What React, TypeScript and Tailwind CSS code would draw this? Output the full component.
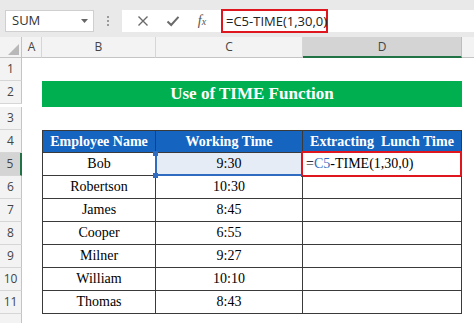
import React from "react";

const ROWS = [
	{ name: "Bob", time: "9:30" },
	{ name: "Robertson", time: "10:30" },
	{ name: "James", time: "8:45" },
	{ name: "Cooper", time: "6:55" },
	{ name: "Milner", time: "9:27" },
	{ name: "William", time: "10:10" },
	{ name: "Thomas", time: "8:43" },
];

const serif = "font-['Liberation_Serif','Times_New_Roman',serif]";
const ui = "font-['Open_Sans','Liberation_Sans',sans-serif]";
const cols = "grid grid-cols-[22px_20px_114px_147px_159px_1fr]";

const RowHead = ({ n, active }: { n: number; active?: boolean }) => (
	<div
		className={`${ui} h-[23px] flex items-center justify-center text-[12px] text-[#444] border-b border-[#d6d6d6] ${
			active ? "bg-[#d4d4d4] border-r-2 border-r-[#217346]" : "bg-[#f3f3f3] border-r border-r-[#c4c4c4]"
		}`}
	>
		{n}
	</div>
);

const App = () => {
	return (
		<div className="w-[474px] h-[323px] overflow-hidden bg-white">
			{/* formula bar */}
			<div className="h-[37px] bg-[#e9e9e9] flex items-start pt-[10px] pl-[5px]">
				<div className={`${ui} w-[89px] h-[22px] bg-white border border-[#cfcfcf] flex items-center justify-between pl-[6px] pr-[5px] text-[13px] text-[#333]`}>
					<span>SUM</span>
					<svg width="7" height="4" viewBox="0 0 7 4">
						<polygon points="0,0 7,0 3.5,4" fill="#666" />
					</svg>
				</div>
				<div className="w-[28px] h-[22px] flex flex-col items-center justify-center gap-[2px]">
					<span className="w-[2px] h-[2px] bg-[#9a9a9a]" />
					<span className="w-[2px] h-[2px] bg-[#9a9a9a]" />
					<span className="w-[2px] h-[2px] bg-[#9a9a9a]" />
				</div>
				<div className="w-[99px] h-[22px] bg-white flex items-center justify-around px-[6px]">
					<svg width="12" height="12" viewBox="0 0 12 12">
						<path d="M1.5 1.5 L10.5 10.5 M10.5 1.5 L1.5 10.5" stroke="#6a6a6a" strokeWidth="1.4" />
					</svg>
					<svg width="14" height="12" viewBox="0 0 14 12">
						<path d="M1.5 6.5 L5.2 10 L12.5 1.8" stroke="#6a6a6a" strokeWidth="2" fill="none" />
					</svg>
					<span className={`${serif} italic text-[14px] text-[#555] leading-none`}>
						f<span className="text-[10px]">x</span>
					</span>
				</div>
				<div className="flex-1 h-[22px] bg-white relative">
					<div className="absolute left-0 top-[-1px] w-[107px] h-[24px] border-2 border-[#e0161e]" />
					<span className={`${ui} absolute left-[5px] top-[2px] text-[13px] text-[#222]`}>=C5-TIME(1,30,0)</span>
				</div>
			</div>

			{/* sheet */}
			<div className={cols}>
				{/* column headers */}
				<div className="h-[21px] bg-[#f3f3f3] border-r border-b border-[#c4c4c4] flex items-end justify-end p-[2px]">
					<svg width="11" height="11" viewBox="0 0 11 11">
						<polygon points="11,0 11,11 0,11" fill="#b8b8b8" />
					</svg>
				</div>
				{["A", "B", "C"].map((c) => (
					<div
						key={c}
						className={`${ui} h-[21px] bg-[#f3f3f3] border-r border-[#d6d6d6] border-b border-b-[#c4c4c4] flex items-center justify-center text-[12px] text-[#444]`}
					>
						{c}
					</div>
				))}
				<div className={`${ui} h-[21px] bg-[#d4d4d4] border-r border-[#bdbdbd] border-b-2 border-b-[#217346] flex items-center justify-center text-[12px] text-[#444]`}>
					D
				</div>
				<div className="h-[21px] bg-[#f3f3f3] border-b border-[#c4c4c4]" />

				{/* row 1 */}
				<RowHead n={1} />
				<div className="col-span-5" />

				{/* row 2 title */}
				<RowHead n={2} />
				<div />
				<div className={`${serif} col-span-3 bg-[#00b050] text-white font-bold text-[17px] flex items-center justify-center`}>
					Use of TIME Function
				</div>
				<div />

				{/* row 3 */}
				<RowHead n={3} />
				<div className="col-span-5" />

				{/* row 4 table head */}
				<RowHead n={4} />
				<div />
				{["Employee Name", "Working Time", "Extracting  Lunch Time"].map((h, i) => (
					<div
						key={h}
						className={`${serif} whitespace-pre bg-[#1565c0] text-white font-bold text-[14px] flex items-center justify-center border-t border-r border-b border-[#3a3a3a] ${
							i === 0 ? "border-l" : ""
						}`}
					>
						{h}
					</div>
				))}
				<div />

				{/* rows 5-11 */}
				{ROWS.map((r, i) => (
					<React.Fragment key={r.name}>
						<RowHead n={i + 5} active={i === 0} />
						<div />
						<div className={`${serif} text-[14px] text-black flex items-center justify-center border-l border-r border-b border-[#3a3a3a]`}>
							{r.name}
						</div>
						<div
							className={`${serif} relative text-[14px] text-black flex items-center justify-center border-r border-b border-[#3a3a3a] ${
								i === 0 ? "bg-[#e6ecf5]" : ""
							}`}
						>
							{r.time}
							{i === 0 && (
								<>
									<div className="absolute left-[-1px] top-0 bottom-[-1px] right-[-1px] border-l-2 border-b-2 border-[#2f6bc0]" />
									<span className="absolute left-[-3px] top-[-2px] w-[5px] h-[5px] bg-[#2f6bc0]" />
									<span className="absolute left-[-3px] bottom-[-3px] w-[5px] h-[5px] bg-[#2f6bc0]" />
								</>
							)}
						</div>
						<div className={`${serif} relative text-[14px] text-black flex items-center border-r border-b border-[#3a3a3a]`}>
							{i === 0 && (
								<>
									<span className="pl-[3px]">
										=<span className="text-[#2f6bc0]">C5</span>-TIME(1,30,0)
									</span>
									<div className="absolute left-[-2px] top-[-2px] right-[-1px] bottom-[-2px] border-2 border-[#e0161e]" />
								</>
							)}
						</div>
						<div />
					</React.Fragment>
				))}

				{/* row 12 partial */}
				<div className="h-[23px] bg-[#f3f3f3] border-r border-[#c4c4c4]" />
				<div className="col-span-5" />
			</div>
		</div>
	);
};

export default App;
